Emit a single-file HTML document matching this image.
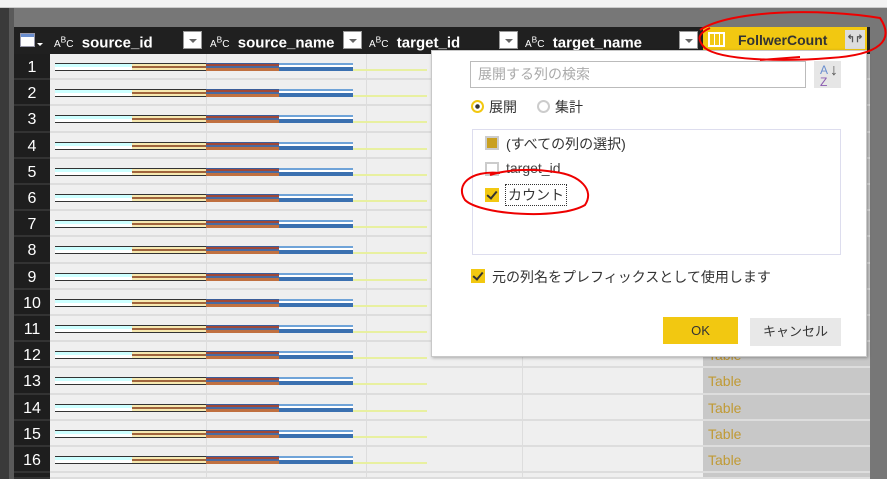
<!DOCTYPE html>
<html><head><meta charset="utf-8">
<style>
*{margin:0;padding:0;box-sizing:border-box}
html,body{width:887px;height:479px;overflow:hidden}
body{background:#777;font-family:"Liberation Sans","Noto Sans CJK JP",sans-serif;position:relative}
.abs{position:absolute}
#top{left:0;top:0;width:887px;height:8px;background:#f3f3f3;border-bottom:1px solid #ccc}
#left{left:0;top:8px;width:9px;height:471px;background:#3a3a3a}
#left2{left:9px;top:8px;width:5px;height:471px;background:#5a5a5a}
#hdr{left:14px;top:27px;width:856px;height:27px;background:#202020;color:#fff;font-weight:bold;font-size:15px}
.hc{position:absolute;top:0;height:27px;line-height:27px}
.dd{position:absolute;top:4px;width:19px;height:18px;background:#fff;border:1px solid #999}
.dd:after{content:"";position:absolute;left:5px;top:7px;border-left:4px solid transparent;border-right:4px solid transparent;border-top:4px solid #666}
.row{position:absolute;left:14px;width:856px;background:#efefef;border-bottom:2px solid #ddd}
.num{position:absolute;left:0;top:0;width:36px;height:calc(100% + 2px);background:#1e1e1e;color:#fff;font-size:16px;text-align:center;line-height:27px;border-bottom:2px solid #333}
.fc{position:absolute;left:689px;top:0;width:167px;height:100%;background:#c8c8c8;color:#c09a35;font-size:14px;line-height:27px;padding-left:5px}
.vs{position:absolute;top:0;width:1px;height:100%;background:#ddd}
.seg{position:absolute;top:9px;height:8px}
#pop{left:431px;top:50px;width:436px;height:307px;background:#fff;border:1px solid #c8c8c8;box-shadow:1px 1px 3px rgba(0,0,0,.3);font-size:14px;color:#333}
.ck{position:absolute;width:14px;height:14px;background:#f2c811}
.ck:after{content:"";position:absolute;left:4px;top:1px;width:4px;height:8px;border-right:2px solid #333;border-bottom:2px solid #333;transform:rotate(40deg)}
</style></head><body>
<div id="top" class="abs"></div>
<div id="left" class="abs"></div><div id="left2" class="abs"></div>
<div id="hdr" class="abs">
 <div class="hc" style="left:6px;top:6px;height:14px;width:15px;background:#fff;border:1px solid #99a"></div>
 <div class="hc" style="left:7px;top:7px;width:13px;height:3px;background:#6a8ecf"></div>
 <div class="abs" style="left:23px;top:16px;border-left:3px solid transparent;border-right:3px solid transparent;border-top:3px solid #fff"></div>
 <div class="hc" style="left:40px"><span style="font-size:10px;font-weight:normal">A<sup>B</sup>C</span>&nbsp; source_id</div>
 <div class="dd" style="left:169px"></div>
 <div class="hc" style="left:196px"><span style="font-size:10px;font-weight:normal">A<sup>B</sup>C</span>&nbsp; source_name</div>
 <div class="dd" style="left:329px"></div>
 <div class="hc" style="left:355px"><span style="font-size:10px;font-weight:normal">A<sup>B</sup>C</span>&nbsp; target_id</div>
 <div class="dd" style="left:485px"></div>
 <div class="hc" style="left:511px"><span style="font-size:10px;font-weight:normal">A<sup>B</sup>C</span>&nbsp; target_name</div>
 <div class="dd" style="left:665px"></div>
 <div class="hc" style="left:689px;width:164px;background:#f2c811;color:#333;padding-left:35px;font-size:14px">FollwerCount</div>
 <div class="abs" style="left:694px;top:5px;width:17px;height:15px;border:2px solid #fff;background:repeating-linear-gradient(90deg,transparent 0 4px,#fff 4px 5px)"></div>
 <div class="abs" style="left:831px;top:3px;width:20px;height:19px;background:#ddd;color:#555;font-size:10px;text-align:center;line-height:19px">↰↱</div>
</div>
<div id="rows"></div>
<script>
var h='';
for(var i=0;i<17;i++){
 var y=Math.round(54+i*26.2), y2=Math.min(479,Math.round(54+(i+1)*26.2));
 h+='<div class="row" style="top:'+y+'px;height:'+(y2-y)+'px"><div class="num">'+(i<16?(i+1):'')+'</div>'+
 '<div class="vs" style="left:192px"></div><div class="vs" style="left:352px"></div><div class="vs" style="left:508px"></div>'+
 (i<16?
 '<div class="seg" style="left:41px;width:77px;border-top:1px solid #333;border-bottom:1px solid #333;background:linear-gradient(#cff 0 3px,#fff 3px)"></div>'+
 '<div class="seg" style="left:118px;width:74px;border-top:1px solid #333;border-bottom:1px solid #333;background:linear-gradient(#f6e9b0 0 2px,#a0643c 2px 4px,#f6e9b0 4px)"></div>'+
 '<div class="seg" style="left:192px;width:73px;background:linear-gradient(#3a5d9a 0 1px,#a04838 1px 3px,#4a6aa0 3px 5px,#c07040 5px 8px)"></div>'+
 '<div class="seg" style="left:265px;width:74px;background:linear-gradient(#6fa3d8 0 2px,#fff 2px 4px,#3a70b0 4px 7px)"></div>'+
 '<div class="seg" style="left:339px;width:74px;top:15px;height:2px;background:#e8f0a0"></div>'+
 '<div class="fc">Table</div>' : '<div class="fc"></div>')+'</div>';
}
document.getElementById('rows').innerHTML=h;
</script>
<div id="pop" class="abs">
 <div class="abs" style="left:38px;top:10px;width:336px;height:27px;border:1px solid #bbb;color:#aaa;padding-left:7px;line-height:25px">展開する列の検索</div>
 <div class="abs" style="left:382px;top:10px;width:27px;height:27px;background:#e6e6e6;font-size:12px;line-height:12px;padding:3px 0 0 6px;color:#6a8ecf">A<br><span style="color:#8a5ab0">Z</span><span class="abs" style="left:16px;top:4px;color:#555;font-size:16px">↓</span></div>
 <div class="abs" style="left:39px;top:49px;width:13px;height:13px;border-radius:50%;border:2px solid #f2c811;background:radial-gradient(#333 0 2px,#fff 2.5px)"></div>
 <div class="abs" style="left:57px;top:46px">展開</div>
 <div class="abs" style="left:105px;top:49px;width:13px;height:13px;border-radius:50%;border:2px solid #ccc"></div>
 <div class="abs" style="left:123px;top:46px">集計</div>
 <div class="abs" style="left:40px;top:78px;width:369px;height:126px;border:1px solid #dde"></div>
 <div class="abs" style="left:53px;top:85px;width:14px;height:14px;border:2px solid #ccc;background:#c9a020"></div>
 <div class="abs" style="left:74px;top:83px">(すべての列の選択)</div>
 <div class="abs" style="left:53px;top:111px;width:14px;height:14px;border:2px solid #ccc"></div>
 <div class="abs" style="left:74px;top:109px;color:#444">target_id</div>
 <div class="ck" style="left:53px;top:137px"></div>
 <div class="abs" style="left:73px;top:133px;border:1px dotted #333;padding:0 2px">カウント</div>
 <div class="ck" style="left:39px;top:218px"></div>
 <div class="abs" style="left:60px;top:216px">元の列名をプレフィックスとして使用します</div>
 <div class="abs" style="left:231px;top:266px;width:75px;height:27px;background:#f2c811;text-align:center;line-height:27px;font-size:13px">OK</div>
 <div class="abs" style="left:318px;top:267px;width:91px;height:28px;background:#e8e8e8;text-align:center;line-height:28px;font-size:13px">キャンセル</div>
</div>
<svg class="abs" style="left:0;top:0" width="887" height="479">
 <path d="M700 30 C730 10,820 8,880 18 C895 40,880 55,830 58 C780 62,720 60,705 48 C697 40,697 34,710 28" fill="none" stroke="#e00" stroke-width="2"/>
 <path d="M760 60 L800 57" stroke="#e00" stroke-width="2"/>
 <path d="M500 173 C470 170,455 185,465 200 C480 215,560 220,585 205 C595 190,580 175,555 172 C530 168,505 170,490 175" fill="none" stroke="#e00" stroke-width="2"/>
</svg>
</body></html>
